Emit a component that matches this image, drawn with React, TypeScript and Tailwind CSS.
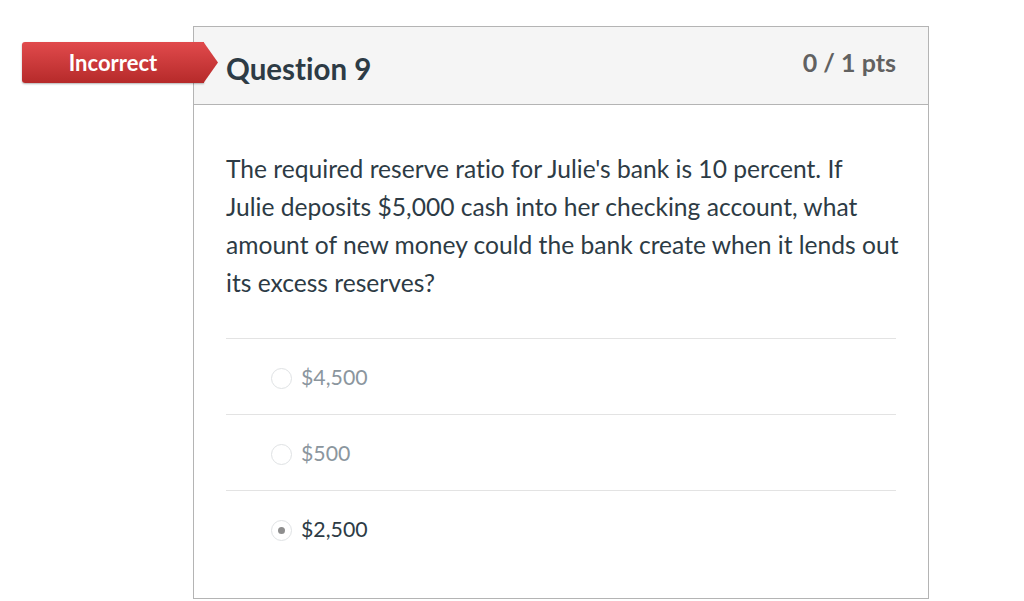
import React from "react";

function Radio({ checked }: { checked?: boolean }) {
  return (
    <span className="flex h-[21px] w-[21px] shrink-0 items-center justify-center rounded-full border border-[#dfe2e4] bg-white">
      {checked && <span className="h-[7px] w-[7px] rounded-full bg-[#8e8e8e]" />}
    </span>
  );
}

function Answer({ label, checked }: { label: string; checked?: boolean }) {
  return (
    <div className="flex h-[76px] items-center border-t border-[#e3e3e3] pt-[3px]">
      <div className="ml-[45px] flex items-center gap-[9px]">
        <Radio checked={checked} />
        <span className={`text-[21.3px] ${checked ? "text-[#2d3b45]" : "text-[#8b969e]"}`}>{label}</span>
      </div>
    </div>
  );
}

export default function App() {
  return (
    <div
      className="relative min-h-[601px] w-[1024px] bg-white [font-variant-ligatures:none]"
      style={{ fontFamily: "Lato, 'Noto Sans', sans-serif" }}
    >
      <div className="ml-[193px] pt-[26px]">
        <div className="flex h-[573px] w-[736px] flex-col border border-[#b4b4b4]">
          <div className="flex h-[78px] items-start justify-between border-b border-[#b4b4b4] bg-[#f5f5f5] pl-[32px] pr-[32px]">
            <h2 className="mt-[23px] text-[29.5px] font-bold leading-[38px] text-[#2d3b45]">Question 9</h2>
            <span className="mt-[19px] text-[25px] font-bold leading-[32px] text-[#616161]">0 / 1 pts</span>
          </div>
          <div className="px-[32px] pt-[45px]">
            <p className="w-[690px] whitespace-nowrap text-[24.6px] leading-[38px] text-[#2d3b45]">
              The required reserve ratio for Julie's bank is 10 percent. If
              <br />
              Julie deposits $5,000 cash into her checking account, what
              <br />
              amount of new money could the bank create when it lends out
              <br />
              its excess reserves?
            </p>
            <div className="mt-[36px]">
              <Answer label="$4,500" />
              <Answer label="$500" />
              <Answer label="$2,500" checked />
            </div>
          </div>
        </div>
      </div>
      <div className="absolute left-[22px] top-[42px] flex h-[41px] items-center">
        <div className="flex h-[41px] w-[182px] items-center justify-center rounded-l-[3px] bg-gradient-to-b from-[#e14a4c] to-[#b62a2a] shadow-[0_1px_2px_rgba(0,0,0,0.3)]">
          <span className="text-[22px] font-bold text-white">Incorrect</span>
        </div>
        <svg width="15" height="41" viewBox="0 0 15 41" className="-ml-px">
          <defs>
            <linearGradient id="bg" x1="0" y1="0" x2="0" y2="1">
              <stop offset="0" stopColor="#e14a4c" />
              <stop offset="1" stopColor="#b62a2a" />
            </linearGradient>
          </defs>
          <polygon points="0,0 0.5,0 15,20.5 0.5,41 0,41" fill="url(#bg)" />
        </svg>
      </div>
    </div>
  );
}
